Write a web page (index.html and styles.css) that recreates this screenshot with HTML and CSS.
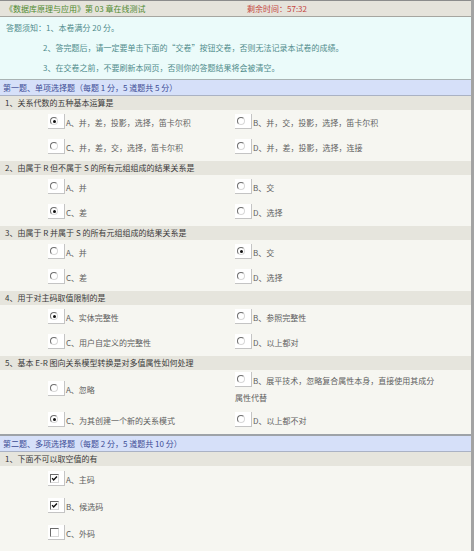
FILE: index.html
```html
<!DOCTYPE html>
<html lang="zh">
<head>
<meta charset="utf-8">
<title>在线测试</title>
<link rel="stylesheet" href="styles.css">
</head>
<body>
<div class="page">
  <div class="topbar">
    <span class="title">《数据库原理与应用》第 03 章在线测试</span>
    <span class="timer">剩余时间：57:32</span>
  </div>
  <div class="notice">
    <div class="nline">答题须知：1、本卷满分 20 分。</div>
    <div class="nline indent">2、答完题后，请一定要单击下面的“交卷”按钮交卷，否则无法记录本试卷的成绩。</div>
    <div class="nline indent">3、在交卷之前，不要刷新本网页，否则你的答题结果将会被清空。</div>
  </div>

  <div class="section">第一题、单项选择题（每题 1 分，5 道题共 5 分）</div>

  <div class="qhead">1、关系代数的五种基本运算是</div>
  <div class="opts">
    <div class="opt"><span class="rb"><span class="radio on"></span></span>A、并，差，投影，选择，笛卡尔积</div>
    <div class="opt"><span class="rb"><span class="radio"></span></span>B、并，交，投影，选择，笛卡尔积</div>
    <div class="opt"><span class="rb"><span class="radio"></span></span>C、并，差，交，选择，笛卡尔积</div>
    <div class="opt"><span class="rb"><span class="radio"></span></span>D、并，差，投影，选择，连接</div>
  </div>

  <div class="qhead">2、由属于 R 但不属于 S 的所有元组组成的结果关系是</div>
  <div class="opts">
    <div class="opt"><span class="rb"><span class="radio"></span></span>A、并</div>
    <div class="opt"><span class="rb"><span class="radio"></span></span>B、交</div>
    <div class="opt"><span class="rb"><span class="radio on"></span></span>C、差</div>
    <div class="opt"><span class="rb"><span class="radio"></span></span>D、选择</div>
  </div>

  <div class="qhead">3、由属于 R 并属于 S 的所有元组组成的结果关系是</div>
  <div class="opts">
    <div class="opt"><span class="rb"><span class="radio"></span></span>A、并</div>
    <div class="opt"><span class="rb"><span class="radio on"></span></span>B、交</div>
    <div class="opt"><span class="rb"><span class="radio"></span></span>C、差</div>
    <div class="opt"><span class="rb"><span class="radio"></span></span>D、选择</div>
  </div>

  <div class="qhead">4、用于对主码取值限制的是</div>
  <div class="opts">
    <div class="opt"><span class="rb"><span class="radio on"></span></span>A、实体完整性</div>
    <div class="opt"><span class="rb"><span class="radio"></span></span>B、参照完整性</div>
    <div class="opt"><span class="rb"><span class="radio"></span></span>C、用户自定义的完整性</div>
    <div class="opt"><span class="rb"><span class="radio"></span></span>D、以上都对</div>
  </div>

  <div class="qhead">5、基本 E-R 图向关系模型转换是对多值属性如何处理</div>
  <div class="opts">
    <div class="opt"><span class="rb"><span class="radio"></span></span>A、忽略</div>
    <div class="opt"><span class="rb"><span class="radio"></span></span>B、展平技术，忽略复合属性本身，直接使用其成分属性代替</div>
    <div class="opt"><span class="rb"><span class="radio on"></span></span>C、为其创建一个新的关系模式</div>
    <div class="opt"><span class="rb"><span class="radio"></span></span>D、以上都不对</div>
  </div>

  <div class="section sec2">第二题、多项选择题（每题 2 分，5 道题共 10 分）</div>

  <div class="qhead">1、下面不可以取空值的有</div>
  <div class="opts single">
    <div class="opt"><span class="rb"><span class="check on"><svg viewBox="0 0 8 8" width="8" height="8"><polyline points="1.3,3.6 3,5.6 6.8,1.6" fill="none" stroke="#111" stroke-width="1.6"/></svg></span></span>A、主码</div>
    <div class="opt"><span class="rb"><span class="check on"><svg viewBox="0 0 8 8" width="8" height="8"><polyline points="1.3,3.6 3,5.6 6.8,1.6" fill="none" stroke="#111" stroke-width="1.6"/></svg></span></span>B、候选码</div>
    <div class="opt"><span class="rb"><span class="check"></span></span>C、外码</div>
  </div>
</div>
</body>
</html>
```

FILE: styles.css
```css
html, body {
  margin: 0;
  padding: 0;
  overflow: hidden;
}
body {
  background: #f6f6f1;
  font-family: "Noto Sans CJK SC", "Noto Sans", sans-serif;
  font-size: 8px;
  color: #555;
}
.page {
  width: 471px;
  border-right: 3px solid #a3a3a3;
  background: #f6f6f1;
  min-height: 551px;
}
.topbar {
  height: 15px;
  border-top: 1px solid #8c8c8c;
  border-bottom: 1px solid #a6a6a0;
  background: #e5e3db;
  display: flex;
  align-items: center;
  line-height: 15px;
  padding-left: 5px;
}
.title {
  color: #4f8a2e;
  width: 242px;
}
.timer {
  color: #c4453f;
}
.notice {
  background: #ebfbfa;
  border-bottom: 1px solid #a9b3b3;
  padding: 1px 0 1px 6px;
  color: #4f8b8b;
}
.nline {
  line-height: 20px;
}
.indent {
  padding-left: 37px;
}
.section {
  background: #d6e0f9;
  color: #3d4c95;
  height: 15px;
  line-height: 15px;
  padding-left: 3px;
  border-bottom: 1px solid #aab2c4;
}
.sec2 {
  border-top: 2px solid #9ea3a8;
}
.qhead {
  background: #e6e5dd;
  color: #3a3a3a;
  height: 14px;
  line-height: 14px;
  padding-left: 5px;
}
.opts {
  display: grid;
  grid-template-columns: 187px 200px;
  grid-auto-rows: minmax(25px, auto);
  padding: 0 0 1px 48px;
  align-items: center;
}
.opts.single {
  grid-template-columns: 187px;
  grid-auto-rows: 27px;
}
.opt {
  line-height: 17px;
  padding: 2px 0;
  color: #606060;
}
.rb {
  display: inline-block;
  box-sizing: border-box;
  width: 17px;
  height: 15px;
  padding: 3px 0 0 2px;
  margin-right: 1px;
  background: #ffffff;
  border-right: 1px solid #c4c4c4;
  border-bottom: 1px solid #c4c4c4;
  vertical-align: -3px;
}
.radio {
  display: block;
  box-sizing: border-box;
  width: 8px;
  height: 8px;
  border-radius: 50%;
  border: 1px solid;
  border-color: #6e6e6e #d8d8d8 #d8d8d8 #6e6e6e;
  background: #fff;
  position: relative;
}
.radio.on::after {
  content: "";
  position: absolute;
  left: 1.5px;
  top: 1.5px;
  width: 3px;
  height: 3px;
  border-radius: 50%;
  background: #111;
}
.check {
  display: block;
  box-sizing: border-box;
  width: 9px;
  height: 9px;
  border: 1px solid;
  border-color: #6a6a6a #d8d8d8 #d8d8d8 #6a6a6a;
  background: #fff;
  line-height: 0;
}
.check svg {
  display: block;
  width: 7px;
  height: 7px;
}
```
